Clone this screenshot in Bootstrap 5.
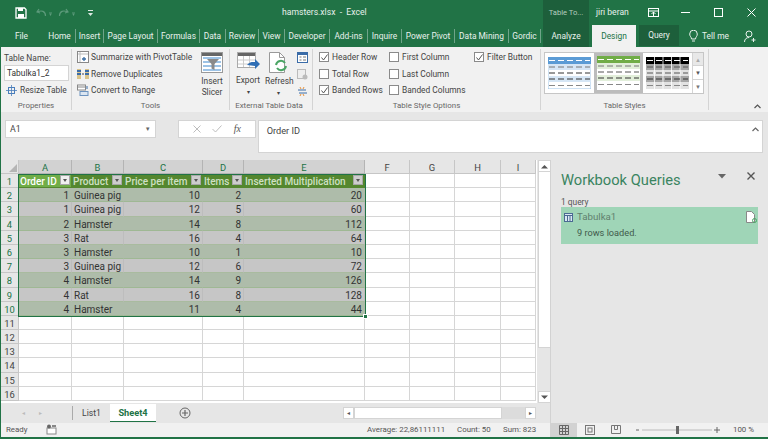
<!DOCTYPE html>
<html lang="en"><head><meta charset="utf-8"><title>hamsters.xlsx - Excel</title>
<link href="https://cdn.jsdelivr.net/npm/bootstrap@5.3.0/dist/css/bootstrap.min.css" rel="stylesheet">
<style>
html,body{height:439px;overflow:hidden;margin:0}
body{font-family:Roboto,"Noto Sans",sans-serif;font-size:8.400px;color:#444;background:#e6e6e6;line-height:1}
svg{flex:none}
.xl{width:768px;height:439px;border-left:1px solid #217346;border-bottom:2px solid #217346;overflow:hidden}
.top{background:#217346;color:#e8f1ec;height:47px;margin-left:-1px;position:relative}
.qat{height:25px;padding-left:15px}
.i-undo{margin-left:9px}
.i-cust{margin-left:8px}
.ttl{width:190px;margin-left:181px;padding-left:7px;flex:none;white-space:nowrap;font-size:8.600px}
.ctx{width:46px;background:#1d5f3b;height:25px;margin-left:78px;text-align:center;line-height:25px;color:#b5cdbf;font-size:7.600px;flex:none}
.usr{margin-left:7px;width:40px;flex:none;white-space:nowrap;font-size:8.600px}
.i-restore{margin-left:12px}
.winb{width:33px;text-align:center;flex:none}
.winb.first{margin-left:9.500px}
.tabs{height:22px}
.tabgrid{display:grid;grid-template-columns:44px 32px 28px 54px 42px 26px 33px 26px 45px 38px 34px 53px 54px 32px;width:541px;flex:none}
.tb{text-align:center;white-space:nowrap;border-right:1px solid #6fa489;height:14px;margin-top:4px;line-height:14px}
.tb.nb{border-right:0;padding-right:1px}
.ctxtab{background:#1d5f3b;height:22px;width:46px;margin-left:2px;text-align:center;line-height:22px;flex:none}
.des{background:#f1f1f1;color:#217346;width:44px;height:22px;margin-left:3px;text-align:center;line-height:22px;flex:none}
.qry{background:#1d5f3b;width:40px;height:21px;margin-left:3px;text-align:center;line-height:21px;flex:none}
.tell{margin-left:10px;gap:4px;white-space:nowrap}
.rib{height:65px;background:#f1f1f1}
.grp{border-right:1px solid #d4d4d4;height:61px;margin-top:2px;position:relative;flex:none}
.lbl{position:absolute;left:0;right:0;bottom:-1px;text-align:center;color:#666;font-size:7.900px;line-height:10px}
.li{height:16.500px;white-space:nowrap;display:flex;align-items:center;gap:2px}
.g-prop{width:71px;padding-left:3px}
.g-tools{width:158px;padding:0 0 0 5px}
.g-ext{width:83px;padding:3px 0 0 5px}
.g-opt{width:228px;padding:0 0 0 6px}
.g-sty{width:168px}
.tname{padding-top:4px;line-height:10px}
.nm{width:65px;height:16px;background:#fff;border:1px solid #d4d4d4;padding-left:2px;line-height:14px;margin:2px 0 1px;color:#333}
.resize{padding-left:2px;gap:3px}
.ck{width:10px;height:10px;border:1px solid #8a8a8a;background:#fff;display:inline-block;flex:none;margin-right:1px;position:relative}
.ck svg{position:absolute;left:0;top:0}
.bigb{text-align:center;line-height:11px;flex:none;white-space:nowrap}
.bigb .cap{margin-top:3px}
.caret{font-size:6px}
.t-list{width:122px}
.b-slice{width:30px;margin-top:3px;margin-left:-2px}
.b-exp{width:26px}
.b-ref{width:26px;margin-left:4px}
.smalls{padding-left:6px;gap:6px}
.lbl-ext{left:-4px}
.c1{width:70px}.c2{width:85px}
.gal{width:160px;height:42px;margin:3px 0 0 3px;background:#fff;border:1px solid #c6c6c6}
.gsel{background:#bcbcbc;height:40px;width:49px;padding:3px;flex:none}
.gs{flex:none;height:40px;padding:4px 3px}
.gsc{width:11px;border-left:1px solid #d4d4d4;flex:none}
.gsc div{height:13.300px;border-bottom:1px solid #d4d4d4;text-align:center;font-size:6px;line-height:13px;color:#555}
.gsc .off{background:#e8e8e8;color:#aaa}
.gsc .last{border:0;color:#777}
.chev-r{right:7px;bottom:3px}
.fbar{height:48px;padding:8px 5px 0 4px}
.box{background:#fff;border:1px solid #d4d4d4;height:18px}
.namebox{width:151px;padding:0 4px;line-height:16px;font-size:8.800px}
.namebox .dd{font-size:6px;color:#666}
.fxb{width:78px;margin-left:22px;margin-right:2px}
.fxt{font-family:"Liberation Serif",serif;font-style:italic;font-size:10px;color:#555}
.fval{width:506px;height:33px;padding:5px 8px;position:relative;font-size:9.200px}
.chev-f{right:3px;top:6px}
.mid{height:263px}
.leftc{width:549px}
.top243{height:243px}
.sheet{width:536px;background:#fff;position:relative;flex:none;height:243px;overflow:hidden}
.rw{display:grid;grid-template-columns:18px 53px 52px 79px 41px 121px 45px 45px 46px 35px;height:14.200px;font-size:10px;line-height:15px;color:#333}
.rw>span{border-right:1px solid #d6d6d6;border-bottom:1px solid #d6d6d6;padding:0 2px;white-space:nowrap;overflow:hidden}
.rw>span:first-child{background:#e6e6e6;text-align:center;font-size:9.400px;border-color:#c6c6c6;padding:0;color:#444}
.hdr{height:14px;color:#444}
.hdr>span{background:#e6e6e6;text-align:center;font-size:9.400px;border-color:#c6c6c6}
.hdr>span.on{background:#d2d2d2;color:#217346;border-color:#b4b4b4}
.rw.act>span:first-child{color:#217346}
.rw.g>span.d{background:#aebcaa;border-color:#aebcaa;border-bottom-color:#9fb894}
.rw.w>span.d{background:#c6c6c6;border-right-color:#bdbdbd;border-bottom-color:#a9bb9f}
.rw.g>span.d.n,.rw.w>span.d.n{text-align:right}
.rw.h>span.d{background:#54872f;color:#cfe0c4;font-weight:500;border-color:#54872f;position:relative;padding:0 1px}
.rw.h>span.d.a1{background:#70ad47;color:#fff}
.fl{position:absolute;right:1px;top:1px;width:10px;height:10px;background:#cdcdcd;border:1px solid #a8a8a8}
.fl:after{content:"";position:absolute;left:2px;top:3px;border:2.500px solid transparent;border-top:3px solid #555}
.a1 .fl{background:#f0f0f0}
.selb{position:absolute;left:17px;top:14px;width:348px;height:143px;border:1.500px solid #217346;pointer-events:none}
.hnd{position:absolute;right:-3px;bottom:-3px;background:#217346;border:1px solid #fff;box-sizing:content-box;width:3px;height:3px}
.corner{position:absolute;left:8px;top:4px;border-style:solid;border-width:0 0 8px 8px;border-color:transparent transparent #b5b5b5 transparent}
.vsc{width:13px;background:#e6e6e6;flex:none;margin-left:1px}
.vsc .ar{height:12px;background:#fff;border:1px solid #d4d4d4;text-align:center}
.vsc .ar svg{vertical-align:top;margin-top:3px}
.vthumb{height:176px;background:#fff;border:1px solid #d4d4d4;border-top:0}
.pane{width:218px;border-left:1px solid #d2d2d2;position:relative;flex:none;padding-left:10px}
.wq{font-size:14.700px;color:#3a8460;padding-top:12px;height:38px;line-height:16px;white-space:nowrap}
.i-menu{left:167px;top:14px}
.i-close{left:196px;top:12px}
.q1{height:8px;line-height:8px;font-size:8.400px;color:#555}
.qc{width:197px;height:37px;background:#9fd5b7;margin-top:1px;padding:4px 4px 0 3px;position:relative}
.qt{gap:4px;font-size:9.700px;color:#5f7f6e;line-height:12px}
.qs{padding-left:13px;margin-top:5px;color:#3f5a4b;font-size:9.200px}
.i-doc{right:1px;top:4px}
.sbar{height:20px;background:#e6e6e6;width:549px}
.navs{width:71px;padding-left:21px;gap:14px;color:#bbb;font-size:6px;flex:none}
.sht{height:14px;line-height:14px;width:38px;text-align:center;border-left:1px solid #aaa;flex:none;font-size:8.600px}
.act4{background:#fff;color:#217346;font-weight:700;border:0;border-bottom:1.500px solid #217346;height:18px;width:46px;line-height:17px;font-size:9.200px}
.i-plus{margin-left:23px}
.hsc{width:193px;height:12px;background:#dcdcdc;margin-left:auto;margin-right:14px}
.hsc i{display:block;background:#fff;border:1px solid #d4d4d4;height:12px;font-style:normal;font-size:6px;line-height:10px;text-align:center;color:#555}
.hs-b{width:11px}.hs-t{width:148px}
.stat{height:14px;background:#f1f1f1;font-size:7.900px;color:#555;line-height:14px;white-space:nowrap}
.stat>span{flex:none}
.s-rdy{margin-left:5px;width:40px}
.i-macro{margin-top:1px}
.s-avg{margin-left:310px;width:78px}
.s-cnt{margin-left:12px;width:35px}
.s-sum{margin-left:11px;width:33px}
.tgt{height:14px;width:26px;text-align:center;flex:none}
.tgt.on{background:#d2d2d2;width:27px;margin-left:14px}
.zoomw{margin-left:5px}
.s-pct{margin-left:11px}
</style></head><body>
<div class="xl d-flex flex-column">
<div class="top">
 <div class="qat d-flex align-items-center">
  <svg width="12" height="12" viewBox="0 0 12 12"><path d="M1 1h8.500L11 2.500V11H1z" fill="none" stroke="#fff" stroke-width="1.300"/><rect x="3" y="1" width="5" height="3" fill="#fff"/><rect x="3" y="7" width="6" height="4" fill="#fff"/></svg>
  <svg class="i-undo" width="44" height="12" viewBox="0 0 44 12" fill="none" stroke="#5d9a7b" stroke-width="1.200"><path d="M3 2 1 5l3 1M1.500 5c4-2 8-1 8 4"/><path d="M13 6h3M14 7l.5 .8 .5-.8"/><path d="M30 2l2 3-3 1M31.500 5c-4-2-8-1-8 4"/><path d="M36 6h3M37 7l.5 .8 .5-.8"/></svg>
  <svg class="i-cust" width="6" height="8" viewBox="0 0 6 8" fill="#dfeae4"><rect x="0" y="1" width="5" height="1"/><path d="M0 4h5L2.500 7z"/></svg>
  <div class="ttl">hamsters.xlsx&nbsp; -&nbsp; Excel</div>
  <div class="ctx">Table To...</div>
  <div class="usr">jiri beran</div>
  <svg class="i-restore" width="11" height="9" viewBox="0 0 11 9" fill="none" stroke="#fff"><rect x=".5" y=".5" width="10" height="8"/><path d="M.5 3h10M5.500 4v4M3.500 6l2-2 2 2"/></svg>
  <div class="winb first"><svg width="9" height="9" viewBox="0 0 9 9"><path d="M0 4.500h9" stroke="#fff"/></svg></div>
  <div class="winb"><svg width="9" height="9" viewBox="0 0 9 9"><rect x=".5" y=".5" width="8" height="8" fill="none" stroke="#fff"/></svg></div>
  <div class="winb"><svg width="9" height="9" viewBox="0 0 9 9"><path d="M.5 .5l8 8M8.500 .5l-8 8" stroke="#fff"/></svg></div>
 </div>
 <div class="tabs d-flex">
  <div class="tabgrid">
  <div class="tb nb">File</div>
  <div class="tb">Home</div><div class="tb">Insert</div><div class="tb">Page Layout</div><div class="tb">Formulas</div><div class="tb">Data</div><div class="tb">Review</div><div class="tb">View</div><div class="tb">Developer</div><div class="tb">Add-ins</div><div class="tb">Inquire</div><div class="tb">Power Pivot</div><div class="tb">Data Mining</div><div class="tb">Gordic</div>
  </div>
  <div class="ctxtab">Analyze</div><div class="des">Design</div><div class="qry">Query</div>
  <div class="d-flex align-items-center tell"><svg width="9" height="13" viewBox="0 0 9 13" fill="none" stroke="#e8f1ec"><path d="M2.500 9C2.500 7 .7 6.500.7 4a3.800 3.800 0 0 1 7.600 0C8.300 6.500 6.500 7 6.500 9zM3 11h3"/></svg>Tell me</div>
  <div class="ms-auto me-2 d-flex align-items-center"><svg class="me-1" width="12" height="13" viewBox="0 0 12 13" fill="none" stroke="#e8f1ec"><circle cx="5" cy="4" r="3"/><path d="M.5 12c0-3 2-4.500 4.500-4.500M9.500 8v4M7.500 10h4"/></svg></div>
 </div>
</div>
<div class="rib d-flex">
 <div class="grp g-prop">
  <div class="tname">Table Name:</div>
  <div class="nm">Tabulka1_2</div>
  <div class="li resize"><svg width="11" height="11" viewBox="0 0 11 11" fill="none" stroke="#4a7ebb"><rect x="2.500" y="2.500" width="6" height="6"/><path d="M5.500 0v11M0 5.500h11" stroke-width=".8"/></svg>Resize Table</div>
  <div class="lbl">Properties</div>
 </div>
 <div class="grp g-tools">
  <div class="d-flex">
   <div class="t-list">
    <div class="li"><svg width="12" height="12" viewBox="0 0 12 12"><rect x=".5" y=".5" width="11" height="11" fill="#fff" stroke="#888"/><path d="M3 1v10M1 3h10" stroke="#bbb"/><path d="M5 8h4M7 6v4" stroke="#3a6ea5" stroke-width="1.300"/></svg>Summarize with PivotTable</div>
    <div class="li"><svg width="12" height="12" viewBox="0 0 12 12"><rect x="0" y="1" width="4" height="10" fill="#d9c38a"/><rect x="8" y="1" width="4" height="10" fill="#d9c38a"/><path d="M0 3h4M8 3h4M0 6h4M8 6h4" stroke="#3b6ca8" stroke-width="2"/><path d="M5.500 5h1v2h-1z" fill="#444"/></svg>Remove Duplicates</div>
    <div class="li"><svg width="12" height="12" viewBox="0 0 12 12" fill="none"><rect x=".5" y="1" width="8" height="5" fill="#fff" stroke="#888"/><path d="M.5 3h8" stroke="#888"/><rect x="3" y="7.500" width="8" height="4" fill="#dce6f1" stroke="#6d93bf"/><path d="M10 2v3" stroke="#3b6ca8"/></svg>Convert to Range</div>
   </div>
   <div class="bigb b-slice">
    <svg width="22" height="21" viewBox="0 0 22 21"><rect x=".5" y=".5" width="21" height="20" fill="#fff" stroke="#999"/><rect x="1" y="1" width="20" height="3" fill="#666"/><path d="M2 6h18M2 10h18M2 14h18M2 18h18" stroke="#9dc3e6" stroke-width="2"/><path d="M6 7h12l-4.500 5v6l-3-1.500V12z" fill="#8a8a8a"/></svg>
    <div class="cap">Insert<br>Slicer</div>
   </div>
  </div>
  <div class="lbl">Tools</div>
 </div>
 <div class="grp g-ext d-flex">
  <div class="bigb b-exp">
   <svg width="23" height="20" viewBox="0 0 23 20"><rect x=".5" y=".5" width="18" height="15" fill="#fff" stroke="#aaa"/><rect x="1" y="1" width="17" height="3" fill="#666"/><path d="M6.500 4v11M12.500 4v11M1 8h17M1 12h17" stroke="#ccc"/><path d="M10 13c3-4 7-3 8-3V7l5 5-5 5v-3c-3 0-5-1-8-1z" fill="#2f6eb5"/></svg>
   <div class="cap">Export<br><span class="caret">▾</span></div>
  </div>
  <div class="bigb b-ref">
   <svg width="20" height="21" viewBox="0 0 20 21"><path d="M1.500 .5h10l5 5v15h-15z" fill="#fff" stroke="#999"/><path d="M11.500 .5v5h5" fill="none" stroke="#999"/><path d="M8 13a5 5 0 0 1 9-2M18 14a5 5 0 0 1-9 2" fill="none" stroke="#4aa564" stroke-width="2"/></svg>
   <div class="cap">Refresh<br><span class="caret">▾</span></div>
  </div>
  <div class="d-flex flex-column smalls">
   <svg width="11" height="11" viewBox="0 0 11 11"><rect x=".5" y=".5" width="10" height="10" fill="#fff" stroke="#3b6ca8"/><rect x="1" y="1" width="9" height="2" fill="#3b6ca8"/><path d="M2.500 5h2M6 5h3M2.500 8h2M6 8h3" stroke="#777"/></svg>
   <svg width="11" height="11" viewBox="0 0 11 11"><rect x=".5" y=".5" width="8" height="9" fill="#eee" stroke="#bbb"/><circle cx="8" cy="8" r="2.500" fill="#bbb"/></svg>
   <svg width="11" height="11" viewBox="0 0 11 11" fill="none"><path d="M1 4h8M2 7h8" stroke="#3b6ca8"/><path d="M3 1l1 2M7 1 6 3M3 10l1-2M7 10 6 8" stroke="#e8913a"/></svg>
  </div>
  <div class="lbl lbl-ext">External Table Data</div>
 </div>
 <div class="grp g-opt">
  <div class="d-flex">
   <div class="c1">
    <div class="li"><span class="ck"><svg width="9" height="9" viewBox="0 0 9 9"><path d="M1.500 4.500 3.500 7l4-5.500" fill="none" stroke="#555"/></svg></span>Header Row</div>
    <div class="li"><span class="ck"></span>Total Row</div>
    <div class="li"><span class="ck"><svg width="9" height="9" viewBox="0 0 9 9"><path d="M1.500 4.500 3.500 7l4-5.500" fill="none" stroke="#555"/></svg></span>Banded Rows</div>
   </div>
   <div class="c2">
    <div class="li"><span class="ck"></span>First Column</div>
    <div class="li"><span class="ck"></span>Last Column</div>
    <div class="li"><span class="ck"></span>Banded Columns</div>
   </div>
   <div><div class="li"><span class="ck"><svg width="9" height="9" viewBox="0 0 9 9"><path d="M1.500 4.500 3.500 7l4-5.500" fill="none" stroke="#555"/></svg></span>Filter Button</div></div>
  </div>
  <div class="lbl">Table Style Options</div>
 </div>
 <div class="grp g-sty">
  <div class="gal d-flex">
   <div class="gs"><svg width="43" height="32" viewBox="0 0 43 32"><rect width="43" height="32" fill="#fff" stroke="#9dc3e6"/><rect width="43" height="7" fill="#5b9bd5"/><rect y="7" width="43" height="6" fill="#d6e6f5"/><rect y="19" width="43" height="6" fill="#d6e6f5"/><g stroke-dasharray="6 3" fill="none"><path d="M1 3.500h41" stroke="#fff"/><path d="M1 10h41" stroke="#777"/><path d="M1 16h41" stroke="#333"/><path d="M1 22h41" stroke="#333"/><path d="M1 28.500h41" stroke="#888"/></g></svg></div>
   <div class="gsel"><svg width="43" height="34" viewBox="0 0 43 34"><rect width="43" height="34" fill="#fff"/><rect width="43" height="7" fill="#70ad47"/><rect y="7" width="43" height="6" fill="#e2efda"/><rect y="19" width="43" height="6" fill="#e2efda"/><g stroke-dasharray="6 3" fill="none"><path d="M1 3.500h41" stroke="#fff"/><path d="M1 10h41" stroke="#777"/><path d="M1 16h41" stroke="#555"/><path d="M1 22h41" stroke="#333"/><path d="M1 28.500h41" stroke="#888"/></g></svg></div>
   <div class="gs"><svg width="43" height="32" viewBox="0 0 43 32"><rect width="43" height="32" fill="#e2e2e2"/><rect width="43" height="7" fill="#000"/><rect y="7" width="43" height="6" fill="#a6a6a6"/><rect y="19" width="43" height="6" fill="#a6a6a6"/><path d="M8.500 0v32M17 0v32M25.500 0v32M34 0v32" stroke="#fff" stroke-width=".8"/><g stroke-dasharray="6 3" fill="none"><path d="M1 3.500h41" stroke="#fff"/><path d="M1 10h41" stroke="#555"/><path d="M1 16h41" stroke="#555"/><path d="M1 22h41" stroke="#333"/><path d="M1 28.500h41" stroke="#888"/></g></svg></div>
   <div class="gsc ms-auto"><div class="off">▲</div><div>▼</div><div class="last">▼</div></div>
  </div>
  <div class="lbl">Table Styles</div>
 </div>
 <div class="flex-grow-1 position-relative"><svg class="position-absolute chev-r" width="7" height="5" viewBox="0 0 7 5"><path d="M.5 4 3.500 1l3 3" fill="none" stroke="#555" stroke-width="1.200"/></svg></div>
</div>
<div class="fbar d-flex">
 <div class="box namebox d-flex justify-content-between"><span>A1</span><span class="dd">▼</span></div>
 <div class="box fxb d-flex align-items-center justify-content-around px-2">
  <svg width="8" height="8" viewBox="0 0 8 8"><path d="M.5 .5l7 7M7.500 .5l-7 7" stroke="#bdbdbd"/></svg>
  <svg width="10" height="8" viewBox="0 0 10 8"><path d="M.5 4 3.500 7 9.500 .5" fill="none" stroke="#bdbdbd"/></svg>
  <span class="fxt">fx</span>
 </div>
 <div class="box fval">Order ID<svg class="position-absolute chev-f" width="7" height="5" viewBox="0 0 7 5"><path d="M.5 4 3.500 1l3 3" fill="none" stroke="#666" stroke-width="1.200"/></svg></div>
</div>
<div class="mid d-flex">
 <div class="d-flex flex-column leftc">
  <div class="d-flex top243">
   <div class="sheet">
    <div class="rw hdr"><span class="position-relative"><b class="corner"></b></span><span class="on">A</span><span class="on">B</span><span class="on">C</span><span class="on">D</span><span class="on">E</span><span>F</span><span>G</span><span>H</span><span>I</span></div>
    <div class="rw h act"><span>1</span><span class="d a1">Order ID<b class="fl"></b></span><span class="d">Product<b class="fl"></b></span><span class="d">Price per item<b class="fl"></b></span><span class="d">Items<b class="fl"></b></span><span class="d">Inserted Multiplication<b class="fl"></b></span><span></span><span></span><span></span><span></span></div>
    <div class="rw g act"><span>2</span><span class="d n">1</span><span class="d">Guinea pig</span><span class="d n">10</span><span class="d n">2</span><span class="d n">20</span><span></span><span></span><span></span><span></span></div>
    <div class="rw w act"><span>3</span><span class="d n">1</span><span class="d">Guinea pig</span><span class="d n">12</span><span class="d n">5</span><span class="d n">60</span><span></span><span></span><span></span><span></span></div>
    <div class="rw g act"><span>4</span><span class="d n">2</span><span class="d">Hamster</span><span class="d n">14</span><span class="d n">8</span><span class="d n">112</span><span></span><span></span><span></span><span></span></div>
    <div class="rw w act"><span>5</span><span class="d n">3</span><span class="d">Rat</span><span class="d n">16</span><span class="d n">4</span><span class="d n">64</span><span></span><span></span><span></span><span></span></div>
    <div class="rw g act"><span>6</span><span class="d n">3</span><span class="d">Hamster</span><span class="d n">10</span><span class="d n">1</span><span class="d n">10</span><span></span><span></span><span></span><span></span></div>
    <div class="rw w act"><span>7</span><span class="d n">3</span><span class="d">Guinea pig</span><span class="d n">12</span><span class="d n">6</span><span class="d n">72</span><span></span><span></span><span></span><span></span></div>
    <div class="rw g act"><span>8</span><span class="d n">4</span><span class="d">Hamster</span><span class="d n">14</span><span class="d n">9</span><span class="d n">126</span><span></span><span></span><span></span><span></span></div>
    <div class="rw w act"><span>9</span><span class="d n">4</span><span class="d">Rat</span><span class="d n">16</span><span class="d n">8</span><span class="d n">128</span><span></span><span></span><span></span><span></span></div>
    <div class="rw g act"><span>10</span><span class="d n">4</span><span class="d">Hamster</span><span class="d n">11</span><span class="d n">4</span><span class="d n">44</span><span></span><span></span><span></span><span></span></div>
    <div class="rw"><span>11</span><span></span><span></span><span></span><span></span><span></span><span></span><span></span><span></span><span></span></div>
    <div class="rw"><span>12</span><span></span><span></span><span></span><span></span><span></span><span></span><span></span><span></span><span></span></div>
    <div class="rw"><span>13</span><span></span><span></span><span></span><span></span><span></span><span></span><span></span><span></span><span></span></div>
    <div class="rw"><span>14</span><span></span><span></span><span></span><span></span><span></span><span></span><span></span><span></span><span></span></div>
    <div class="rw"><span>15</span><span></span><span></span><span></span><span></span><span></span><span></span><span></span><span></span><span></span></div>
    <div class="rw"><span>16</span><span></span><span></span><span></span><span></span><span></span><span></span><span></span><span></span><span></span></div>
    <div class="selb"><b class="hnd"></b></div>
   </div>
   <div class="vsc d-flex flex-column"><div class="ar"><svg width="7" height="5" viewBox="0 0 7 5"><path d="M0 4.500 3.500 1 7 4.500z" fill="#555"/></svg></div><div class="vthumb"></div><div class="ar mt-auto"><svg width="7" height="5" viewBox="0 0 7 5"><path d="M0 .5 3.500 4 7 .5z" fill="#555"/></svg></div></div>
  </div>
  <div class="sbar d-flex align-items-center">
   <div class="d-flex navs">◂<span>▸</span></div>
   <div class="sht">List1</div>
   <div class="sht act4">Sheet4</div>
   <svg class="i-plus" width="12" height="12" viewBox="0 0 12 12" fill="none" stroke="#666"><circle cx="6" cy="6" r="5"/><path d="M6 3v6M3 6h6" stroke-width="1.200"/></svg>
   <div class="hsc d-flex"><i class="hs-b">◂</i><i class="hs-t"></i><i class="hs-b ms-auto">▸</i></div>
  </div>
 </div>
 <div class="pane">
  <div class="wq">Workbook Queries</div>
  <svg class="position-absolute i-menu" width="8" height="5" viewBox="0 0 8 5"><path d="M0 0h8L4 4.500z" fill="#666"/></svg>
  <svg class="position-absolute i-close" width="8" height="8" viewBox="0 0 8 8"><path d="M.5 .5l7 7M7.500 .5l-7 7" stroke="#555" stroke-width="1.400"/></svg>
  <div class="q1">1 query</div>
  <div class="qc">
   <div class="d-flex align-items-center qt"><svg width="9" height="9" viewBox="0 0 9 9"><rect x=".5" y=".5" width="8" height="8" fill="#dbe8f3" stroke="#4a6a92"/><path d="M.5 2.500h8M3.500 2.500v6M6 2.500v6" stroke="#4a6a92"/></svg>Tabulka1</div>
   <div class="qs">9 rows loaded.</div>
   <svg class="position-absolute i-doc" width="11" height="12" viewBox="0 0 11 12"><path d="M.5 .5h5l3 3v8h-8z" fill="#fff" stroke="#888"/><circle cx="8.500" cy="9.500" r="2" fill="none" stroke="#4aa564"/></svg>
  </div>
 </div>
</div>
<div class="stat d-flex">
 <span class="s-rdy">Ready</span>
 <svg class="i-macro" width="11" height="11" viewBox="0 0 11 11"><rect x="1" y="4" width="9" height="6" fill="#fff" stroke="#888"/><circle cx="3" cy="2.500" r="2" fill="#666"/><path d="M6 1h4v2H6z" fill="#888"/></svg>
 <span class="s-avg">Average: 22,86111111</span>
 <span class="s-cnt">Count: 50</span>
 <span class="s-sum">Sum: 823</span>
 <div class="tgt on"><svg width="10" height="10" viewBox="0 0 10 10" fill="none" stroke="#666"><path d="M.5 .5h9v9h-9zM3.500 .5v9M6.500 .5v9M.5 3.500h9M.5 6.500h9"/></svg></div>
 <div class="tgt"><svg width="10" height="10" viewBox="0 0 10 10" fill="none" stroke="#777"><rect x=".5" y=".5" width="9" height="9"/><rect x="3" y="3" width="4" height="4"/></svg></div>
 <div class="tgt"><svg width="10" height="10" viewBox="0 0 10 10" fill="none" stroke="#777"><path d="M.5 .5h9v8h-9zM3.500 .5v4h3v-4"/></svg></div>
 <div class="d-flex align-items-center zoomw"><svg width="88" height="10" viewBox="0 0 88 10"><path d="M2 5h3M80 5h6M83 2v6" stroke="#666"/><path d="M8 5h70" stroke="#bbb"/><rect x="42" y="1" width="3" height="8" fill="#666"/></svg></div>
 <span class="s-pct">100 %</span>
</div>
</div>
</body></html>
